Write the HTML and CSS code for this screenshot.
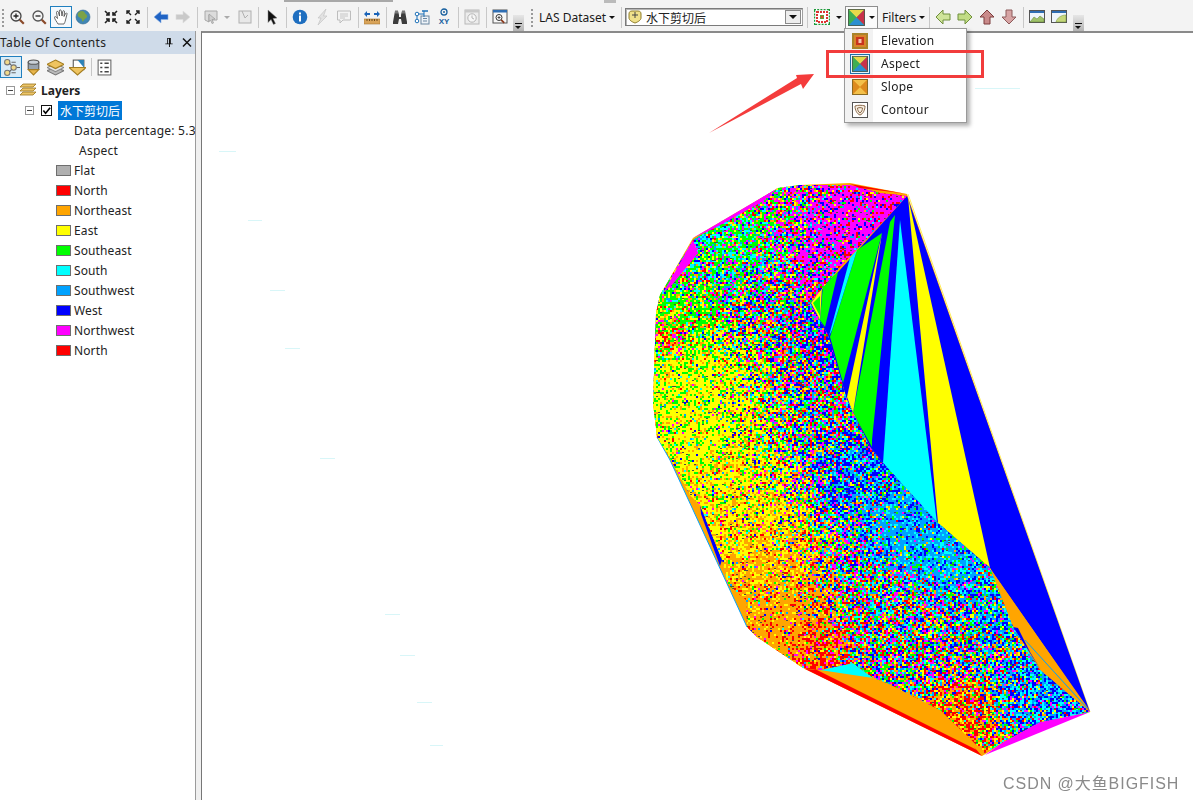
FILE: index.html
```html
<!DOCTYPE html>
<html lang="en">
<head>
<meta charset="utf-8">
<title>ArcMap LAS Dataset Aspect</title>
<link rel="stylesheet" href="styles.css">
</head>
<body>
<div class="app">
  <div class="toolbar">
    <div class="top-mark"></div>
    <div class="top-mark small"></div>
    <span class="grip first"></span>
    <span class="btn"><svg viewBox="0 0 16 16"><circle cx="7" cy="7" r="5" fill="#f4f4f4" stroke="#444" stroke-width="1.3"/><path d="M4.5 7h5M7 4.5v5" stroke="#222" stroke-width="1.3"/><path d="M10.8 10.8l4 4" stroke="#8a4a2a" stroke-width="2.2"/></svg></span>
    <span class="btn"><svg viewBox="0 0 16 16"><circle cx="7" cy="7" r="5" fill="#f4f4f4" stroke="#555" stroke-width="1.3"/><path d="M4.5 7h5" stroke="#222" stroke-width="1.3"/><path d="M10.8 10.8l4 4" stroke="#8a4a2a" stroke-width="2.2"/></svg></span>
    <span class="btn on"><svg viewBox="0 0 16 16"><path d="M5 15C4 13 1.500 10 1.500 8.500s1.500-1 3 1L3.500 3.500c0-1.500 1.500-1.500 2 0L6.500 7 6.300 2c0-1.500 2-1.500 2 0L9 7l.7-4.500c.3-1.300 2-1 1.800.4L11 7.500l1.500-3c.6-1 1.800-.5 1.500.6L12.500 11c-.4 2-1 3-1.500 4z" fill="#fff" stroke="#444" stroke-width=".8"/></svg></span>
    <span class="btn"><svg viewBox="0 0 16 16"><circle cx="8" cy="8" r="7" fill="#3f86b5" stroke="#356a8c" stroke-width=".6"/><path d="M4 3c3-2 5-1 6 1s3 2 2 4-2 1-3 3-2 2-2 0-3-2-4-4 0-3 1-4z" fill="#7ba247"/></svg></span>
    <span class="sep"></span>
    <span class="btn"><svg viewBox="0 0 16 16" class="dark"><path d="M2 2l4 4M6 3v3H3M14 2l-4 4M10 3v3h3M2 14l4-4M6 13v-3H3M14 14l-4-4M10 13v-3h3" fill="none" stroke="#222" stroke-width="1.600"/></svg></span>
    <span class="btn"><svg viewBox="0 0 16 16"><path d="M6 6L2 2M2 5V2h3M10 6l4-4M14 5V2h-3M6 10l-4 4M2 11v3h3M10 10l4 4M14 11v3h-3" fill="none" stroke="#222" stroke-width="1.400"/></svg></span>
    <span class="sep"></span>
    <span class="btn"><svg viewBox="0 0 16 16"><path d="M1 8l7-6v3.500h7v5H8V14z" fill="#1f63c4" stroke="#8fb4e4" stroke-width=".6"/></svg></span>
    <span class="btn"><svg viewBox="0 0 16 16"><path d="M15 8L8 2v3.500H1v5h7V14z" fill="#c9c9c9" stroke="#dedede" stroke-width=".6"/></svg></span>
    <span class="sep"></span>
    <span class="btn"><svg viewBox="0 0 16 16"><path d="M2 2h12v9H9L6 6v7L2 11z" fill="#dcdcdc" stroke="#a8a8a8"/><path d="M6 5l6 5-3 .5 1.500 3.500-1.500.5L7.500 11 6 12.500z" fill="#cfcfcf" stroke="#9a9a9a" stroke-width=".7"/></svg></span>
    <span class="caret gray slim"></span>
    <span class="btn tight"><svg viewBox="0 0 16 16"><rect x="2" y="2" width="12" height="12" fill="#e8e8e8" stroke="#b0b0b0"/><path d="M5 2l3 7 3-3" fill="none" stroke="#b0b0b0"/></svg></span>
    <span class="sep"></span>
    <span class="btn"><svg viewBox="0 0 16 16"><path d="M4 1l9 8-4 .5 2.500 5-2 1L7 10.500 4 13.500z" fill="#111" stroke="#888" stroke-width=".5"/></svg></span>
    <span class="sep"></span>
    <span class="btn"><svg viewBox="0 0 16 16"><circle cx="8" cy="8" r="7.300" fill="#1f6fc0"/><rect x="7" y="6.500" width="2" height="6" fill="#fff"/><rect x="7" y="3.500" width="2" height="2" fill="#fff"/></svg></span>
    <span class="btn"><svg viewBox="0 0 16 16"><path d="M12 0L4 9h3l-3 7 9-9H9.500z" fill="#e2e2e2" stroke="#c4c4c4" stroke-width=".7"/></svg></span>
    <span class="btn"><svg viewBox="0 0 16 16"><path d="M1.500 2h13v9H7l-3 3v-3H1.500z" fill="#f3f3f3" stroke="#bdbdbd"/><path d="M4 5h8M4 7h8M4 9h5" stroke="#c6c6c6"/></svg></span>
    <span class="sep"></span>
    <span class="btn"><svg viewBox="0 0 16 16"><path d="M0 5l3-3v2h3v2H3v2zM16 5l-3-3v2h-3v2h3v2z" fill="#1a63b8"/><rect x="0" y="10" width="16" height="5" fill="#d9a45a" stroke="#a87531" stroke-width=".6"/><path d="M3 10v2M5.500 10v2M8 10v2M10.500 10v2M13 10v2" stroke="#6d4a1c"/></svg></span>
    <span class="sep"></span>
    <span class="btn"><svg viewBox="0 0 16 16"><path d="M3 2h3l1 4v2h2V6l1-4h3l2 11v2H10l-1-5H7l-1 5H1v-2z" fill="#3c3c3c"/><rect x="3" y="1.500" width="3" height="3" fill="#777"/><rect x="10" y="1.500" width="3" height="3" fill="#777"/></svg></span>
    <span class="btn"><svg viewBox="0 0 16 16"><rect x="7" y="7" width="8" height="8" fill="#eef3f8" stroke="#6a86a0"/><path d="M9 9.500h4M9 12h4" stroke="#6a86a0"/><circle cx="3" cy="12" r="1.800" fill="#fff" stroke="#1d70b8"/><circle cx="3" cy="5" r="1.800" fill="#fff" stroke="#1d70b8"/><path d="M3 7v3M5 5h5M10 2v6" stroke="#1d70b8"/><path d="M8 2h6" stroke="#1d70b8" stroke-width="1.500"/></svg></span>
    <span class="btn xy"><svg viewBox="0 0 16 18"><circle cx="8" cy="4" r="3" fill="none" stroke="#17609f" stroke-width="1.300"/><circle cx="8" cy="4" r="1" fill="#17609f"/><text x="8" y="16" class="xy-text">XY</text></svg></span>
    <span class="sep"></span>
    <span class="btn"><svg viewBox="0 0 16 16"><rect x="1" y="1" width="14" height="14" fill="#ececec" stroke="#b8b8b8"/><rect x="1" y="1" width="14" height="2.500" fill="#c8c8c8"/><circle cx="8" cy="9" r="4.200" fill="#f6f6f6" stroke="#b5b5b5"/><path d="M8 6.500V9l2 1" fill="none" stroke="#b5b5b5"/></svg></span>
    <span class="sep"></span>
    <span class="btn"><svg viewBox="0 0 16 16"><rect x="1" y="1" width="14" height="13" fill="#f7f7f7" stroke="#555"/><rect x="1" y="1" width="14" height="2.500" fill="#2f6eb3"/><circle cx="7" cy="8.500" r="3" fill="#fff" stroke="#333"/><path d="M5.500 8.500h3M7 7v3" stroke="#333" stroke-width=".8"/><path d="M9.200 10.800l3 3" stroke="#8a3a1e" stroke-width="1.800"/></svg></span>
    <span class="more"><i></i></span>
    <span class="grip second"></span>
    <span class="menu-btn las">LAS Dataset<b class="caret"></b></span>
    <span class="sep bar-gap"></span>
    <span class="combo">
      <svg viewBox="0 0 16 16"><path d="M2 5c0-2 1-3 3-3h6c2 0 3 1 3 3v4c0 2-3 4-6 5-3-1-6-3-6-5z" fill="#efe08a" stroke="#8f7d2a"/><path d="M5 6h6M8 3v6" stroke="#444"/></svg>
      <span class="combo-text">水下剪切后</span>
      <span class="combo-arrow"><b class="caret"></b></span>
    </span>
    <span class="sep combo-gap"></span>
    <span class="btn pts"><svg viewBox="0 0 16 16"><rect width="16" height="16" fill="#fff"/><path d="M0 0h16v16H0z" fill="none" stroke="#1d9a3a" stroke-width="2.400" stroke-dasharray="2 1.200"/><path d="M3 3h10v10H3z" fill="none" stroke="#d33" stroke-width="2" stroke-dasharray="2 1"/><path d="M6 6h4v4H6z" fill="#6b9a3a"/><path d="M7 7h2v2H7z" fill="#e04a2a"/></svg></span>
    <span class="caret"></span>
    <span class="aspect-btn">
      <svg viewBox="0 0 16 16"><use href="#aspect-ic"/></svg>
      <b class="caret"></b>
    </span>
    <span class="menu-btn filters">Filters<b class="caret"></b></span>
    <span class="sep"></span>
    <span class="btn narrow"><svg viewBox="0 0 16 16"><path d="M1 8l7-7v4h7v6H8v4z" fill="#cfe49a" stroke="#6f8f3c"/></svg></span>
    <span class="btn narrow"><svg viewBox="0 0 16 16"><path d="M15 8L8 1v4H1v6h7v4z" fill="#c1dc84" stroke="#6f8f3c"/></svg></span>
    <span class="btn narrow"><svg viewBox="0 0 16 16"><path d="M8 1l7 7h-4v7H5V8H1z" fill="#c98a8a" stroke="#7d3d3d"/></svg></span>
    <span class="btn narrow"><svg viewBox="0 0 16 16"><path d="M8 15l7-7h-4V1H5v7H1z" fill="#d7a4a4" stroke="#8d5a5a"/></svg></span>
    <span class="sep"></span>
    <span class="btn narrow"><svg viewBox="0 0 16 16"><rect x="0.500" y="1.500" width="15" height="12" fill="#eef5fb" stroke="#555"/><rect x="1" y="2" width="14" height="2" fill="#2f6eb3"/><path d="M1 13l4-5 3 2 3-3 4 3v3z" fill="#9fc26a" stroke="#5f7f2f" stroke-width=".5"/></svg></span>
    <span class="btn narrow"><svg viewBox="0 0 16 16"><rect x="0.500" y="1.500" width="15" height="12" fill="#eef5fb" stroke="#555"/><rect x="1" y="2" width="14" height="2" fill="#2f6eb3"/><path d="M5 13c1-4 5-7 10-7v7z" fill="#c5d77a" stroke="#6f8f3c" stroke-width=".5"/></svg></span>
    <span class="more last"><i></i></span>
  </div>

  <div class="workspace">
    <aside class="toc">
      <div class="toc-title">
        <span>Table Of Contents</span>
        <span class="toc-actions">
          <svg viewBox="0 0 10 12"><path d="M3 1h4v6h2v1H6v3H5V8H1V7h2zM4 2v5h1V2z" fill="#111"/></svg>
          <svg viewBox="0 0 10 10"><path d="M1 1l8 8M9 1L1 9" stroke="#111" stroke-width="1.500"/></svg>
        </span>
      </div>
      <div class="toc-tools">
        <span class="toc-btn on"><svg viewBox="0 0 16 16"><circle cx="4" cy="3" r="2.500" fill="#f0d98a" stroke="#777"/><circle cx="10" cy="8" r="2.500" fill="#f0d98a" stroke="#777"/><circle cx="4" cy="13" r="2.500" fill="#f0d98a" stroke="#777"/><path d="M6 4l2 2M8 10l-2 2M13 8h3M8 3h4M8 13h4" stroke="#666"/></svg></span>
        <span class="toc-btn"><svg viewBox="0 0 16 16"><path d="M3 3v6c0 2 10 2 10 0V3z" fill="#9aa4ae" stroke="#555"/><ellipse cx="8" cy="3" rx="5" ry="2" fill="#cbd2d9" stroke="#555"/><path d="M3 10h10l-5 5z" fill="#e8b64c" stroke="#a87e22"/></svg></span>
        <span class="toc-btn"><svg viewBox="0 0 16 16"><path d="M8 8l8 3-8 4-8-4z" fill="#bbb" stroke="#777"/><path d="M8 5l8 3-8 4-8-4z" fill="#e3e3e3" stroke="#888"/><path d="M8 1l8 4-8 4-8-4z" fill="#efc460" stroke="#a47d20"/></svg></span>
        <span class="toc-btn"><svg viewBox="0 0 16 16"><rect x="4" y="1" width="10" height="9" fill="#fff" stroke="#555"/><path d="M8 1h6v7z" fill="#2b82b8"/><path d="M0 8h16l-8 7z" fill="#efc460" stroke="#a47d20"/></svg></span>
        <span class="toc-sep"></span>
        <span class="toc-btn"><svg viewBox="0 0 16 16"><rect x="2" y="1" width="12" height="14" fill="#fff" stroke="#666"/><path d="M4 4h2M8 4h4M4 8h2M8 8h4M4 12h2M8 12h4" stroke="#444" stroke-width="1.200"/></svg></span>
      </div>
      <div class="tree">
        <div class="row layers">
          <span class="tog"></span>
          <svg class="stack" viewBox="0 0 18 14"><path d="M4 1h13l-3 3H1zM4 5h13l-3 3H1zM4 9h13l-3 3H1z" fill="#ecc568" stroke="#9a7420" stroke-width=".8"/></svg>
          <b>Layers</b>
        </div>
        <div class="row layer">
          <span class="tog"></span>
          <span class="check"><svg viewBox="0 0 10 10"><path d="M1.500 5l2.500 3 5-6" fill="none" stroke="#000" stroke-width="1.800"/></svg></span>
          <span class="selected">水下剪切后</span>
        </div>
        <div class="row note">Data percentage: 5.3</div>
        <div class="row note aspect">Aspect</div>
        <div class="row item"><i class="swatch flat"></i>Flat</div>
        <div class="row item"><i class="swatch north"></i>North</div>
        <div class="row item"><i class="swatch northeast"></i>Northeast</div>
        <div class="row item"><i class="swatch east"></i>East</div>
        <div class="row item"><i class="swatch southeast"></i>Southeast</div>
        <div class="row item"><i class="swatch south"></i>South</div>
        <div class="row item"><i class="swatch southwest"></i>Southwest</div>
        <div class="row item"><i class="swatch west"></i>West</div>
        <div class="row item"><i class="swatch northwest"></i>Northwest</div>
        <div class="row item"><i class="swatch north"></i>North</div>
      </div>
    </aside>
    <main class="map">
      <canvas id="map" width="991" height="767"></canvas>
    </main>
  </div>

  <div class="dropdown">
    <div class="dd-item"><span class="dd-ic"><svg viewBox="0 0 16 16"><rect width="16" height="16" fill="#a8842a"/><rect x="2" y="2" width="12" height="12" fill="#d9842a"/><rect x="4" y="4" width="8" height="8" fill="#c8341f"/><rect x="6.500" y="6" width="3" height="4" fill="#f6c6b0"/></svg></span>Elevation</div>
    <div class="dd-item current"><span class="dd-ic"><svg viewBox="0 0 16 16"><use href="#aspect-ic"/></svg></span>Aspect</div>
    <div class="dd-item"><span class="dd-ic"><svg viewBox="0 0 16 16"><rect width="16" height="16" fill="#e9a528"/><path d="M0 0l8 8 8-8zM0 16l8-8 8 8z" fill="#f3c04a"/><path d="M0 0l8 8-8 8zM16 0L8 8l8 8z" fill="#dd8a1e"/><rect x=".5" y=".5" width="15" height="15" fill="none" stroke="#8a6a22"/></svg></span>Slope</div>
    <div class="dd-item"><span class="dd-ic"><svg viewBox="0 0 16 16"><rect x=".5" y=".5" width="15" height="15" fill="#fff" stroke="#555"/><path d="M3 4c3-1 7-1 10 0 0 4-2 8-5 9-3-1-5-5-5-9z" fill="#f7efe4" stroke="#8a6a4a"/><path d="M5.500 6c2-.5 3-.5 5 0 0 2-1 4-2.500 5C6.500 10 5.500 8 5.500 6z" fill="none" stroke="#8a6a4a"/></svg></span>Contour</div>
  </div>

  <div class="callout"></div>
  <svg class="arrow" viewBox="0 0 110 64"><polygon points="0,60 88,5 87,2 105,1 94,16 92,11"/></svg>
  <div class="watermark">CSDN @大鱼BIGFISH</div>
</div>

<svg class="defs" width="0" height="0">
  <symbol id="aspect-ic" viewBox="0 0 16 16">
    <rect width="16" height="16" fill="#3a6"/>
    <path d="M0 0h16L8 8z" fill="#e8d84a"/>
    <path d="M0 0v16l8-8z" fill="#3fae52"/>
    <path d="M16 0v16L8 8z" fill="#c8324a"/>
    <path d="M0 16h16L8 8z" fill="#2a8fd0"/>
    <rect x=".5" y=".5" width="15" height="15" fill="none" stroke="#4a5a4a" stroke-width=".8"/>
  </symbol>
</svg>
<script src="script.js"></script>
</body>
</html>
```
FILE: styles.css
```css
* { box-sizing: border-box; }
html, body { margin: 0; height: 100%; overflow: hidden; }
body { background: #fff; font-family: "Noto Sans", "Noto Sans CJK SC", sans-serif; font-size: 12px; color: #1a1a1a; }
.app { position: relative; width: 1193px; height: 800px; overflow: hidden; }

.toolbar { position: relative; display: flex; align-items: center; height: 31px; padding: 3px 0 0 6px; background: #f3f3f3; }
.top-mark { position: absolute; left: 284px; top: 0; width: 109px; height: 2px; background: #a8a8a8; }
.top-mark.small { left: 604px; width: 12px; height: 3px; background: #bbb; }
.grip { position: absolute; top: 8px; width: 2px; height: 20px; background-image: radial-gradient(circle, #9a9a9a 1px, transparent 1px); background-size: 2px 4px; }
.grip.first { left: 2px; }
.grip.second { left: 531px; }
.btn { flex: none; display: flex; align-items: center; justify-content: center; width: 22px; height: 22px; }
.btn svg { width: 16px; height: 16px; }
.btn.on { border: 1px solid #1f7fbf; background: #f4f9fd; }
.btn.tight { margin: 0 -1px 0 2px; }
.btn.xy svg { height: 18px; }
.xy-text { font: bold 8px "Liberation Sans", sans-serif; fill: #17609f; text-anchor: middle; }
.btn.narrow { width: 22px; }
.btn.pts { margin-left: 3px; }
.sep { flex: none; width: 1px; height: 21px; margin: 0 2px 0 3px; background: #c8c8c8; }
.sep.bar-gap { margin: 0 3px 0 1px; }
.sep.combo-gap { margin: 0 0 0 4px; }
.caret { display: block; flex: none; width: 0; height: 0; margin: 0 3px; border: 3px solid transparent; border-top: 3px solid #111; border-bottom: 0; }
.caret.gray { border-top-color: #aaa; }
.caret.slim { margin: 0 2px; }
.more { flex: none; position: relative; align-self: flex-end; width: 11px; height: 16px; margin: 0 0 0 2px; background: linear-gradient(#e6e6e6, #b4b4b4); }
.more.last { margin-left: 3px; }
.more i { position: absolute; left: 2px; bottom: 3px; width: 7px; height: 5px; border-top: 1px solid #111; }
.more i::after { content: ""; position: absolute; left: 0; top: 2px; border: 3.500px solid transparent; border-top: 3px solid #111; border-bottom: 0; }
.menu-btn { flex: none; display: flex; align-items: center; font-size: 12px; white-space: nowrap; }
.menu-btn .caret { margin: 0 0 0 3px; }
.las { margin-left: 15px; width: 81px; }
.combo { flex: none; display: flex; align-items: center; width: 178px; height: 18px; margin-left: 0; border: 1px solid #7a7a7a; border-right-color: #a0a0a0; background: #fff; box-shadow: inset 1px 1px 0 #b5b5b5; }
.combo svg { flex: none; width: 16px; height: 16px; margin: 0 3px 0 1px; }
.combo-text { flex: 1; font-family: "Noto Sans CJK SC", sans-serif; font-size: 12px; color: #222; }
.combo-arrow { display: flex; align-items: center; justify-content: center; width: 16px; height: 14px; margin-right: 1px; background: #ededed; border: 1px solid #8a8a8a; }
.combo-arrow .caret { margin: 0; border-width: 4px 4px 0; }
.aspect-btn { flex: none; display: flex; align-items: center; width: 33px; height: 23px; margin: 0 4px 0 0; padding-left: 2px; border: 1px solid #8e8e8e; border-bottom-color: #fff; background: #fbfbfb; }
.aspect-btn svg { width: 17px; height: 17px; }
.aspect-btn .caret { margin: 0 0 0 4px; }
.filters { width: 44px; }

.workspace { display: flex; height: 769px; background: #f0f0f0; }
.toc { flex: none; width: 196px; display: flex; flex-direction: column; background: #fff; border-right: 1px solid #9b9b9b; }
.toc-title { flex: none; display: flex; align-items: center; justify-content: space-between; height: 23px; padding: 0 3px 0 0; background: #cfdbe9; font-size: 12px; letter-spacing: .03em; color: #222; }
.toc-actions { display: flex; align-items: center; gap: 8px; }
.toc-actions svg { width: 10px; height: 11px; }
.toc-tools { flex: none; display: flex; align-items: center; height: 26px; padding-left: 0; background: #f5f5f5; }
.toc-btn { display: flex; align-items: center; justify-content: center; width: 22px; height: 22px; }
.toc-btn svg { width: 17px; height: 17px; }
.toc-btn.on { border: 1px solid #1f7fbf; background: #d9ecf8; }
.toc-sep { width: 1px; height: 18px; margin: 0 1px 0 3px; background: #c6c6c6; }
.tree { flex: 1; padding-top: 0; overflow: hidden; white-space: nowrap; }
.row { display: flex; align-items: center; height: 20px; color: #222; }
.tog { flex: none; position: relative; width: 9px; height: 9px; border: 1px solid #999; background: #fff; }
.tog::after { content: ""; position: absolute; left: 1px; top: 3px; width: 5px; height: 1px; background: #444; }
.layers .tog { margin-left: 6px; }
.stack { flex: none; width: 18px; height: 14px; margin-left: 4px; }
.layers b { margin-left: 4px; }
.layer .tog { margin-left: 25px; }
.check { flex: none; display: flex; align-items: center; justify-content: center; width: 11px; height: 11px; margin-left: 7px; border: 1px solid #111; background: #fff; }
.check svg { width: 9px; height: 9px; }
.selected { margin-left: 6px; padding: 0 2px; height: 19px; line-height: 19px; background: #0078d7; color: #fff; font-family: "Noto Sans CJK SC", sans-serif; font-size: 12px; }
.note { padding-left: 74px; letter-spacing: .02em; }
.note.aspect { padding-left: 79px; }
.item { padding-left: 56px; letter-spacing: .01em; }
.swatch { flex: none; width: 15px; height: 11px; margin-right: 3px; border: 1px solid #6e6e6e; }
.flat { background: #b0b0b0; }
.north { background: #ff0000; }
.northeast { background: #ffa500; }
.east { background: #ffff00; }
.southeast { background: #00ff00; }
.south { background: #00ffff; }
.southwest { background: #00a2ff; }
.west { background: #0000ff; }
.northwest { background: #ff00ff; }

.map { flex: none; width: 992px; margin-left: 5px; border-left: 1px solid #777; border-top: 2px solid #8a8a8a; background: #fff; }
.map canvas { display: block; width: 991px; height: 767px; }

.dropdown { position: absolute; left: 844px; top: 28px; width: 123px; height: 95px; padding: 0 1px; background: linear-gradient(90deg, #f2f2f2 28px, #fff 28px); border: 1px solid #9a9a9a; box-shadow: 3px 3px 4px rgba(0,0,0,.3); font-size: 12px; letter-spacing: .02em; }
.dd-item { display: flex; align-items: center; height: 23px; color: #222; }
.dd-ic { flex: none; display: flex; align-items: center; justify-content: center; width: 20px; height: 20px; margin: 0 11px 0 4px; border: 1px solid transparent; }
.dd-ic svg { width: 16px; height: 16px; }
.current .dd-ic { border-color: #1f6fa8; background: #e6f2fa; }
.callout { position: absolute; left: 826px; top: 50px; width: 158px; height: 28px; border: 3px solid #f23c3c; }
.arrow { position: absolute; left: 709px; top: 73px; width: 110px; height: 64px; }
.arrow polygon { fill: #f43c3c; }
.watermark { position: absolute; left: 1003px; top: 770px; font-family: "Liberation Sans", "Noto Sans CJK SC", sans-serif; font-size: 16px; letter-spacing: .95px; color: #8a8a8a; text-shadow: 0 0 2px #fff; white-space: nowrap; }
.defs { position: absolute; }
```
FILE: script.js
```js
(function () {
  var c = document.getElementById('map');
  var ctx = c.getContext('2d');
  ctx.translate(-202, -33);
  var R = '#ff0000', O = '#ffa500', Y = '#ffff00', G = '#00ff00', C = '#00ffff', S = '#00a2ff', B = '#0000ff', M = '#ff00ff';
  var seed = 12345;
  function rnd() { seed = (seed * 1664525 + 1013904223) >>> 0; return seed / 4294967296; }
  function poly(color, pts) {
    ctx.fillStyle = color;
    ctx.beginPath();
    ctx.moveTo(pts[0], pts[1]);
    for (var i = 2; i < pts.length; i += 2) ctx.lineTo(pts[i], pts[i + 1]);
    ctx.closePath();
    ctx.fill();
  }
  function line(color, w, x1, y1, x2, y2) {
    ctx.strokeStyle = color; ctx.lineWidth = w;
    ctx.beginPath(); ctx.moveTo(x1, y1); ctx.lineTo(x2, y2); ctx.stroke();
  }
  var faint = [[219,151,236],[248,220,262],[270,290,285],[285,348,300],[320,458,335],[385,614,400],[400,655,415],[417,702,432],[430,745,443],[975,88,1020]];
  faint.forEach(function (f) { line('#d8f6f8', 1, f[0], f[1] + .5, f[2], f[1] + .5); });

  var hull = [778,188, 800,185, 850,183, 907,194, 1090,712, 1040,722, 982,756, 805,669, 757,637, 747,627, 670,460, 657,437, 653,403, 656,313, 660,295, 693,238];
  poly(O, hull);
  ctx.strokeStyle = S; ctx.lineWidth = 1;
  ctx.beginPath(); ctx.moveTo(657,437); ctx.lineTo(670,460); ctx.lineTo(747,627); ctx.stroke();
  line('#ffee55', 1, 908, 194, 1090, 712);

  // fan of flat triangles
  poly(B, [907,196, 810,303, 828,335, 847,400, 870,447, 883,463, 938,523, 990,568, 1090,712]);
  poly(O, [991,570, 1090,711, 1015,628]);
  line(S, 1, 1025, 640, 1087, 708);
  poly(B, [1013,627, 1041,670, 1030,652, 1018,628]);
  poly(Y, [908,197, 990,568, 938,523]);
  poly(C, [900,220, 883,463, 937,523]);
  poly(G, [890,222, 895,215, 872,440, 872,447, 853,413]);
  poly(Y, [882,233, 853,413, 847,397]);
  poly(G, [882,233, 857,250, 830,337, 843,383]);
  poly(C, [857,250, 850,258, 829,336, 832,330]);
  poly(G, [838,272, 823,285, 820,320, 825,327]);
  poly(Y, [822,288, 811,303, 820,320]);
  poly(G, [820,296, 813,303, 820,316]);

  // bottom flats
  poly(R, [805,669, 982,756, 975,748, 819,670]);
  poly(O, [815,669, 873,678, 887,683, 940,710, 977,750]);
  poly(C, [820,670, 853,663, 873,678]);
  poly(M, [985,755, 1090,712, 1040,722, 1005,741]);
  // left slivers
  poly(B, [700,503, 722,560, 720,566, 701,514]);

  // textured surface
  var noise = [778,188, 800,185, 850,185, 880,193, 907,196, 840,267, 810,303, 828,335, 847,400, 870,447, 883,463, 938,523, 990,568, 1013,627, 1040,670, 1090,712, 1040,722, 1005,741, 985,753, 940,710, 887,683, 873,678, 853,663, 820,670, 803,668, 757,637, 747,627, 746,600, 728,585, 722,560, 700,505, 690,495, 668,455, 657,437, 653,403, 656,313, 660,295, 693,240];
  var colors = [R, O, Y, G, C, S, B, M];
  var zones = [
    [865,225,38,[1,.1,.1,.1,.1,.2,.8,9],1.4],
    [895,205,16,[2,0,0,0,0,0,.4,9],2],
    [825,265,26,[.8,.1,.2,.3,.2,.4,1.5,4],1],
    [725,235,32,[.2,.3,.8,4,2.400,.6,.3,1.400],1.2],
    [770,205,22,[.5,.3,.8,2,.6,.4,.8,3],.8],
    [680,315,30,[.5,.8,2,5,.6,.2,.1,.2],1.3],
    [672,335,12,[4,3,1,1,.1,0,.1,2],2],
    [688,395,42,[.1,.7,8,2.200,.05,.05,.05,.05],1.6],
    [700,460,42,[.2,1.500,8,1.500,.05,.05,.05,.1],1.6],
    [735,520,40,[.4,3,7,.9,.05,.05,.05,.1],1.4],
    [755,575,36,[1,7,3.500,.3,.05,.05,.05,.1],1.6],
    [775,625,32,[1.500,9,.8,.1,.02,.02,.02,.02],2],
    [815,648,22,[6,5,.5,.3,.1,.1,.1,1],1.6],
    [838,330,28,[.8,.1,.1,.3,.4,1,4,2],1],
    [865,475,30,[.3,.1,.2,.6,1.500,3,4,.3],1.1],
    [915,520,30,[.1,.1,.1,.5,1.500,8,1.500,.1],1.4],
    [950,555,28,[.1,.1,.2,1,3,6,1.500,.1],1.3],
    [990,610,28,[.6,.5,.5,1.200,1.800,3,2.500,.5],.8],
    [1045,690,30,[.3,.1,.3,.3,3,3,4,.3],1.4],
    [955,725,26,[6,5,2,.8,.2,.2,.3,.5],1.4]
  ];
  ctx.save();
  ctx.beginPath();
  ctx.moveTo(noise[0], noise[1]);
  for (var i = 2; i < noise.length; i += 2) ctx.lineTo(noise[i], noise[i + 1]);
  ctx.closePath();
  ctx.clip();
  var base = [1.1, .9, .9, 1.1, .9, .9, 1.2, 1];
  for (var y = 182; y < 760; y += 2) {
    for (var x = 650; x < 1095; x += 2) {
      var w = base.slice();
      for (var z = 0; z < zones.length; z++) {
        var zn = zones[z], dx = (x - zn[0]) / zn[2], dy = (y - zn[1]) / zn[2];
        var g = Math.exp(-(dx * dx + dy * dy)) * zn[4] * 5;
        for (var k = 0; k < 8; k++) w[k] += zn[3][k] * g;
      }
      var sum = 0, pick = 0;
      for (k = 0; k < 8; k++) sum += w[k];
      var t = rnd() * sum;
      for (k = 0; k < 8; k++) { t -= w[k]; if (t <= 0) { pick = k; break; } }
      ctx.fillStyle = colors[pick];
      var wide = rnd() < .35 ? 4 + Math.floor(rnd() * 4) : 2 + Math.floor(rnd() * 2);
      var high = rnd() < .25 ? 3 : 2;
      ctx.fillRect(x, y, wide, high);
      if (rnd() < .04) { ctx.fillStyle = '#4a4a4a'; ctx.fillRect(x, y, 2, 1); }
    }
  }
  ctx.restore();
  poly(M, [693,238, 778,188, 760,203, 715,228]);
  poly(M, [693,240, 663,293, 672,285, 698,253]);
  poly(R, [850,184, 907,194, 893,192, 860,188]);
})();
```
